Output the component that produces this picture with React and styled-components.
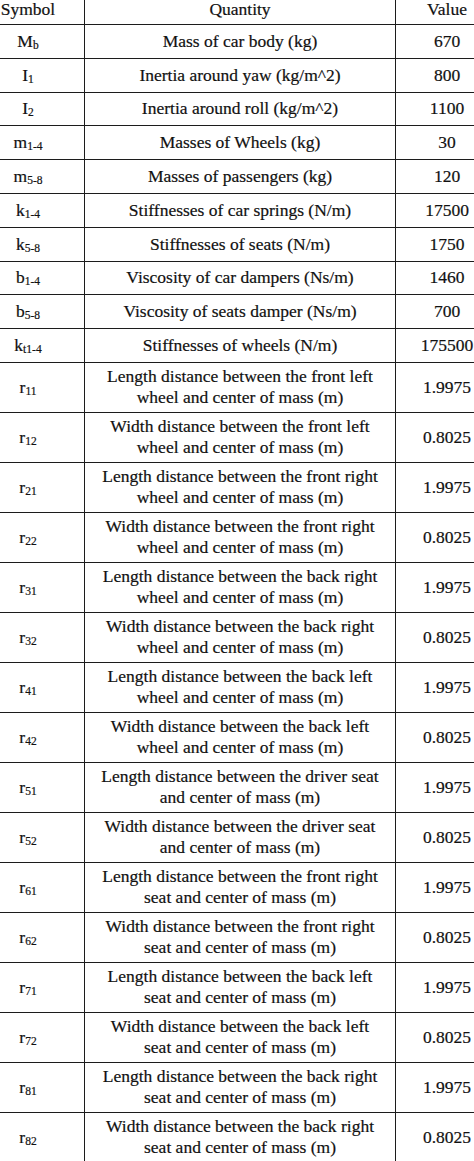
import React from 'react';
import styled, { createGlobalStyle } from 'styled-components';

const GlobalStyle = createGlobalStyle`
    html, body {
        margin: 0;
        padding: 0;
        background: #fff;
        overflow: hidden;
    }
`;

/* 스크린샷은 표의 양 끝이 잘려 있으므로, 바깥 박스에서 잘라낸다 */
const Viewport = styled.div`
    width: 474px;
    height: 1161px;
    overflow: hidden;
    position: relative;
`;

const Table = styled.table`
    border-collapse: collapse;
    margin: -8px 0 0 -29px;
    table-layout: fixed;
    width: 527px;
    font-family: "Liberation Serif", "Times New Roman", serif;
    font-size: 17.5px;
    color: #111;
    -webkit-text-stroke: 0.2px #111;

    col.sym { width: 113px; }
    col.qty { width: 311px; }
    col.val { width: 103px; }
`;

const Row = styled.tr`
    height: ${(p) => (p.$double ? '50px' : p.$head ? '32px' : '33.8px')};
`;

const Cell = styled.td`
    border: 1.5px solid #1c1c1c;
    text-align: center;
    vertical-align: middle;
    padding: 0;
    line-height: 21px;
    white-space: nowrap;
`;

const HeadCell = styled(Cell).attrs({ as: 'th' })`
    font-weight: normal;
    padding-top: 2px;
`;

const Sub = styled.span`
    font-size: 11.5px;
    vertical-align: -2px;
    line-height: 0;
`;

const Sym = ({ base, sub }) => (
    <>
        {base}
        {sub && <Sub>{sub}</Sub>}
    </>
);

const singleRows = [
    ['M', 'b', 'Mass of car body (kg)', '670'],
    ['I', '1', 'Inertia around yaw (kg/m^2)', '800'],
    ['I', '2', 'Inertia around roll (kg/m^2)', '1100'],
    ['m', '1-4', 'Masses of Wheels (kg)', '30'],
    ['m', '5-8', 'Masses of passengers (kg)', '120'],
    ['k', '1-4', 'Stiffnesses of car springs (N/m)', '17500'],
    ['k', '5-8', 'Stiffnesses of seats (N/m)', '1750'],
    ['b', '1-4', 'Viscosity of car dampers (Ns/m)', '1460'],
    ['b', '5-8', 'Viscosity of seats damper (Ns/m)', '700'],
    ['k', 't1-4', 'Stiffnesses of wheels (N/m)', '175500'],
];

const places = [
    ['1', 'front left', 'wheel'],
    ['2', 'front right', 'wheel'],
    ['3', 'back right', 'wheel'],
    ['4', 'back left', 'wheel'],
    ['5', 'driver seat', null],
    ['6', 'front right', 'seat'],
    ['7', 'back left', 'seat'],
    ['8', 'back right', 'seat'],
];

// r11 ~ r82 : 길이/폭 두 줄짜리 행
const doubleRows = places.flatMap(([n, where, what]) => {
    const tail = what ? `${what} and center of mass (m)` : 'and center of mass (m)';
    return [
        [`${n}1`, `Length distance between the ${where}`, tail, '1.9975'],
        [`${n}2`, `Width distance between the ${where}`, tail, '0.8025'],
    ];
});

const App = () => {
    return (
        <Viewport>
            <GlobalStyle />
            <Table>
                <colgroup>
                    <col className="sym" />
                    <col className="qty" />
                    <col className="val" />
                </colgroup>
                <thead>
                    <Row $head>
                        <HeadCell>Symbol</HeadCell>
                        <HeadCell>Quantity</HeadCell>
                        <HeadCell>Value</HeadCell>
                    </Row>
                </thead>
                <tbody>
                    {singleRows.map(([base, sub, qty, val]) => (
                        <Row key={base + sub}>
                            <Cell><Sym base={base} sub={sub} /></Cell>
                            <Cell>{qty}</Cell>
                            <Cell>{val}</Cell>
                        </Row>
                    ))}
                    {doubleRows.map(([sub, line1, line2, val]) => (
                        <Row key={'r' + sub} $double>
                            <Cell><Sym base="r" sub={sub} /></Cell>
                            <Cell>
                                {line1}
                                <br />
                                {line2}
                            </Cell>
                            <Cell>{val}</Cell>
                        </Row>
                    ))}
                </tbody>
            </Table>
        </Viewport>
    );
};

export default App;
